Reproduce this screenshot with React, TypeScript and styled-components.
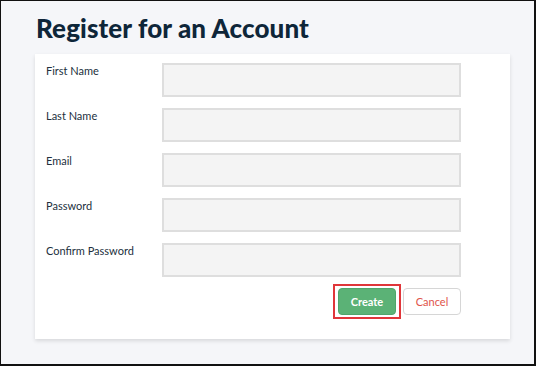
import React from 'react';
import styled, { createGlobalStyle } from 'styled-components';

const GlobalStyle = createGlobalStyle`
    html, body {
        margin: 0;
        padding: 0;
    }
    body {
        font-family: "Lato", "Liberation Sans", sans-serif;
        background: #ffffff;
    }
`;

const Frame = styled.div`
    box-sizing: border-box;
    width: 536px;
    height: 366px;
    border-style: solid;
    border-color: #111;
    border-width: 1px 2px 2px 1px;
    background: #f5f6f9;
    padding: 11px 0 0 34px;
`;

const Title = styled.h1`
    margin: 0 0 9px 1px;
    font-size: 26px;
    font-weight: 900;
    color: #0e2639;
    line-height: 33px;
    letter-spacing: 0.1px;
`;

const Card = styled.div`
    box-sizing: border-box;
    width: 475px;
    background: #ffffff;
    padding: 9px 49px 20px 11px;
    box-shadow: 0 2px 4px rgba(0, 0, 0, 0.12);
    display: flex;
    flex-direction: column;
    gap: 11px;
`;

const Row = styled.div`
    display: flex;
    align-items: flex-start;
`;

const Label = styled.label`
    width: 116px;
    padding-top: 1px;
    font-size: 11px;
    color: #22303d;
    line-height: 14px;
`;

const Input = styled.div`
    box-sizing: border-box;
    width: 300px;
    height: 34px;
    background: #f4f4f4;
    border: 2px solid #dedede;
`;

const Actions = styled.div`
    display: flex;
    justify-content: flex-end;
    align-items: center;
    gap: 2px;
    margin-top: -4px;
`;

const Highlight = styled.span`
    display: flex;
    padding: 2px 3px;
    border: 2px solid #e0363a;
`;

const Button = styled.button<{ $primary?: boolean }>`
    box-sizing: border-box;
    width: 58px;
    height: 27px;
    border-radius: 4px;
    font-family: "Lato", "Liberation Sans", sans-serif;
    font-size: 11px;
    font-weight: ${(p) => (p.$primary ? 700 : 400)};
    cursor: pointer;
    background: ${(p) => (p.$primary ? '#5bb276' : '#ffffff')};
    color: ${(p) => (p.$primary ? '#ffffff' : '#e0544a')};
    border: ${(p) => (p.$primary ? '1px solid #4fa56b' : '1px solid #d6d6d6')};
`;

const fields = ['First Name', 'Last Name', 'Email', 'Password', 'Confirm Password'];

export default function App() {
    return (
        <>
            <GlobalStyle />
            <Frame>
                <Title>Register for an Account</Title>
                <Card>
                    {fields.map((f) => (
                        <Row key={f}>
                            <Label>{f}</Label>
                            <Input />
                        </Row>
                    ))}
                    <Actions>
                        <Highlight>
                            <Button $primary>Create</Button>
                        </Highlight>
                        <Button>Cancel</Button>
                    </Actions>
                </Card>
            </Frame>
        </>
    );
}
